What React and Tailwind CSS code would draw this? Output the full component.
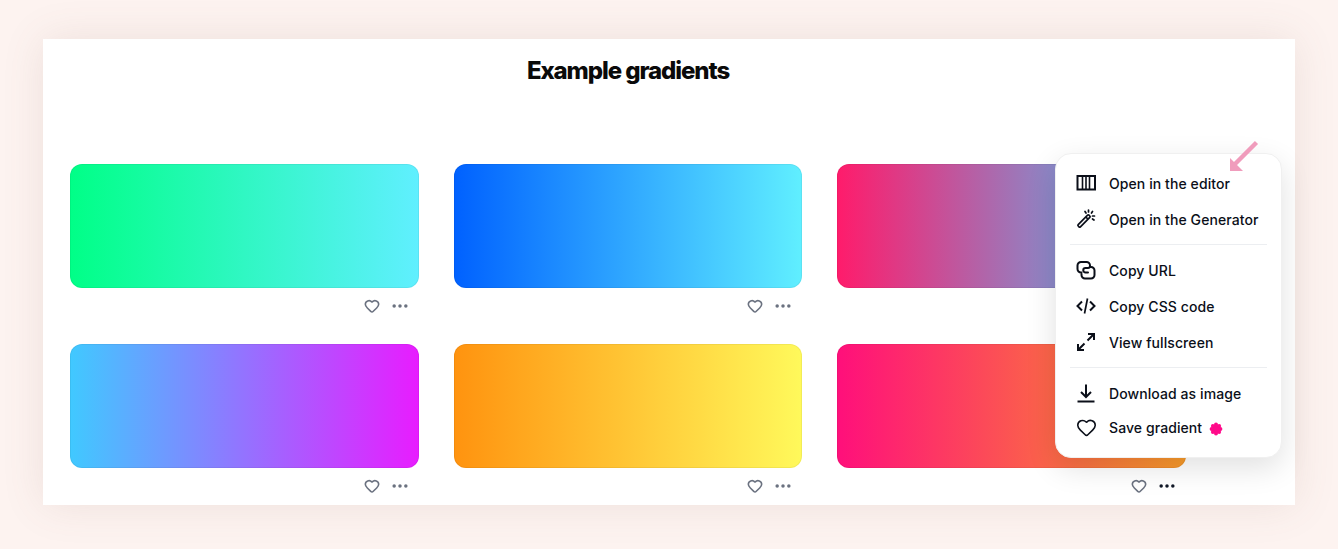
import { Heart, Ellipsis } from "lucide-react"

const gradients = [
    "from-[#00ff87] to-[#60efff]",
    "from-[#0061ff] to-[#60efff]",
    "from-[#ff1b6b] to-[#45caff]",
    "from-[#40c9ff] to-[#e81cff]",
    "from-[#ff930f] to-[#fff95b]",
    "from-[#ff0f7b] to-[#f89b29]",
]

const ColumnsIcon = () => (
    <svg width="20" height="20" viewBox="0 0 20 20" fill="none" stroke="currentColor" strokeWidth="2">
        <rect x="1.500" y="3" width="17.500" height="13.500" />
        <path d="M6.500 3v13.500M10 3v13.500M13.500 3v13.500" strokeWidth="1.600" />
    </svg>
)

const WandIcon = () => (
    <svg width="20" height="20" viewBox="0 0 20 20" fill="none" stroke="currentColor" strokeWidth="1.700">
        <path d="M2.200 15.600 11.600 6.200a1 1 0 0 1 1.400 0l.8.8a1 1 0 0 1 0 1.400l-9.400 9.400a1 1 0 0 1-1.400 0l-.8-.8a1 1 0 0 1 0-1.400z" />
        <path d="m9.800 8 2.200 2.200" />
        <path d="M12.500 1v2M16.500 2.500l-1 1.500M18.500 7h-2M18 11l-1.500-1M9 2.500l1 1.500" strokeLinecap="round" />
    </svg>
)

const LinkIcon = () => (
    <svg width="20" height="20" viewBox="0 0 20 20" fill="none" stroke="currentColor" strokeWidth="2" strokeLinecap="round">
        <path d="M5.500 12.500H5A3.500 3.500 0 0 1 1.500 9V5.500A3.500 3.500 0 0 1 5 2h5.500A3.500 3.500 0 0 1 14 5.500V6a2 2 0 0 1-2 2H9.500a2.200 2.200 0 0 0 0 4.500H12" />
        <path d="M14 7h1a3.500 3.500 0 0 1 3.500 3.500V15a3.500 3.500 0 0 1-3.500 3.500H9A3.500 3.500 0 0 1 5.500 15v-1" />
    </svg>
)

const CodeIcon = () => (
    <svg width="20" height="20" viewBox="0 0 20 20" fill="none" stroke="currentColor" strokeWidth="2">
        <path d="M6 5.500 1.500 10 6 14.500M14 5.500l4.500 4.500-4.500 4.500" />
        <path d="M11.500 2.500 8.500 17.500" strokeWidth="1.700" />
    </svg>
)

const ExpandIcon = () => (
    <svg width="20" height="20" viewBox="0 0 20 20" fill="none" stroke="currentColor" strokeWidth="2">
        <path d="M11.500 8.500 18 2M12 2h6v6" />
        <path d="M8.500 11.500 2 18M2 12v6h6" />
    </svg>
)

const DownloadIcon = () => (
    <svg width="20" height="20" viewBox="0 0 20 20" fill="none" stroke="currentColor" strokeWidth="2">
        <path d="M10 1.500v12M5 9l5 5 5-5" />
        <path d="M1.500 18.500h17" />
    </svg>
)

const Flower = () => (
    <svg width="14" height="14" viewBox="0 0 14 14" fill="#ff0a8a">
        <circle cx="7" cy="7" r="4.200" />
        <circle cx="7" cy="2.600" r="2" />
        <circle cx="7" cy="11.400" r="2" />
        <circle cx="2.600" cy="7" r="2" />
        <circle cx="11.400" cy="7" r="2" />
        <circle cx="3.900" cy="3.900" r="2" />
        <circle cx="10.100" cy="3.900" r="2" />
        <circle cx="3.900" cy="10.100" r="2" />
        <circle cx="10.100" cy="10.100" r="2" />
    </svg>
)

const Card = ({ gradient, active }) => (
    <div>
        <div className={`h-[124px] rounded-xl ring-1 ring-inset ring-black/5 bg-linear-to-r/srgb ${gradient}`} />
        <div className={`flex items-center justify-end gap-[10px] pr-[9px] h-[36px] ${active ? "text-[#111827]" : "text-[#6b7280]"}`}>
            <Heart size={16} strokeWidth={2.400} className="text-[#6b7280]" />
            <Ellipsis size={20} strokeWidth={2.200} />
        </div>
    </div>
)

const MenuItem = ({ icon, label, height = "h-[36px]", children }) => (
    <div className={`flex items-center ${height} pl-[20px] text-[14px] font-medium tracking-[0.006em] text-[#0b0f19]`}>
        <span className="w-[33px] flex items-center">{icon}</span>
        <span>{label}</span>
        {children}
    </div>
)

export default function App() {
    return (
        <div className="w-[1338px] h-[549px] bg-[#fdf3f0] pt-[39px] px-[43px] overflow-hidden font-['Inter',sans-serif]">
            <div className="relative h-[466px] bg-white pt-[16px] pl-[27px] pr-[109px] shadow-[0_0_40px_rgba(120,90,80,0.12)]">
                <h2 className="text-center text-[24px] leading-[32px] font-extrabold tracking-[-0.045em] text-[#0a0a0a]">
                    Example gradients
                </h2>
                <div className="mt-[77px] grid grid-cols-3 gap-x-[35px] gap-y-[20px]">
                    {gradients.map((g, i) => (
                        <Card key={g} gradient={g} active={i === 5} />
                    ))}
                </div>

                <div className="absolute left-[1012px] top-[114px] w-[227px] h-[305px] bg-white rounded-2xl border border-[#f0f0f0] shadow-[0_10px_30px_rgba(0,0,0,0.12)] pt-[11px]">
                    <MenuItem icon={<ColumnsIcon />} label="Open in the editor" />
                    <MenuItem icon={<WandIcon />} label="Open in the Generator" />
                    <div className="mx-[14px] my-[7px] h-px bg-[#eceef1]" />
                    <MenuItem icon={<LinkIcon />} label="Copy URL" />
                    <MenuItem icon={<CodeIcon />} label="Copy CSS code" />
                    <MenuItem icon={<ExpandIcon />} label="View fullscreen" />
                    <div className="mx-[14px] my-[7px] h-px bg-[#eceef1]" />
                    <MenuItem icon={<DownloadIcon />} label="Download as image" />
                    <MenuItem icon={<Heart size={21} strokeWidth={1.800} />} label="Save gradient" height="h-[32px]">
                        <span className="ml-[7px] mt-[3px]"><Flower /></span>
                    </MenuItem>
                </div>

                <svg className="absolute left-[1184px] top-[100px]" width="32" height="34" viewBox="0 0 32 34" fill="none">
                    <path d="M29.500 3.500 7 26" stroke="#f09cbc" strokeWidth="4.500" />
                    <path d="M3 32h13L3 19z" fill="#f09cbc" />
                </svg>
            </div>
        </div>
    )
}
